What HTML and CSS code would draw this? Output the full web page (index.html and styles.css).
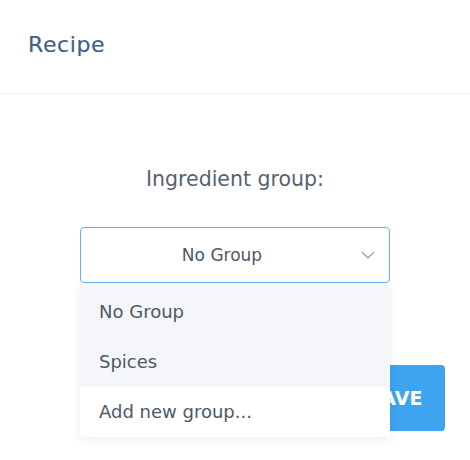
FILE: index.html
```html
<!DOCTYPE html>
<html lang="en">

<head>
    <meta charset="UTF-8">
    <meta name="viewport" content="width=device-width, initial-scale=1.0">
    <title>Recipe</title>
    <link rel="stylesheet" href="styles.css">
</head>

<body>
    <div class="header">
        <h1>Recipe</h1>
    </div>

    <div class="content">
        <div class="label">Ingredient group:</div>

        <div class="select-wrap">
            <div class="select">
                <span>No Group</span>
                <svg class="chevron" width="14" height="8" viewBox="0 0 14 8">
                    <path d="M1 1 L7 7 L13 1" fill="none" stroke="#9aa3ad" stroke-width="1.4" />
                </svg>
            </div>
            <ul class="dropdown">
                <li class="option">No Group</li>
                <li class="option">Spices</li>
                <li class="option add">Add new group...</li>
            </ul>
        </div>

        <div class="actions">
            <button class="button">SAVE</button>
        </div>
    </div>
</body>

</html>
```

FILE: styles.css
```css
body {
    font-family: 'DejaVu Sans', 'Open Sans', sans-serif;
    margin: 0;
    background: #ffffff;
    color: #4d5968;
    width: 470px;
    height: 460px;
    overflow: hidden;
}

.header {
    height: 93px;
    border-bottom: 1px solid #eceef1;
    display: flex;
    align-items: center;
    padding-left: 28px;
}

h1 {
    margin: 0 0 4px;
    font-size: 22px;
    font-weight: 400;
    letter-spacing: 0.6px;
    color: #3f5f86;
    -webkit-text-stroke: 0.2px #3f5f86;
}

.content {
    display: flex;
    flex-direction: column;
    align-items: center;
}

.label {
    margin-top: 72px;
    font-size: 20.5px;
    color: #58626f;
    height: 26px;
    line-height: 26px;
}

.select-wrap {
    position: relative;
    margin-top: 35px;
    width: 310px;
}

.select {
    height: 54px;
    border: 1.5px solid #62b1f3;
    border-radius: 4px;
    display: flex;
    align-items: center;
    justify-content: center;
    padding-right: 26px;
    font-size: 17px;
    color: #4d5968;
    position: relative;
}

.chevron {
    position: absolute;
    right: 14px;
    top: 23px;
}

.dropdown {
    position: absolute;
    top: 57px;
    left: 0;
    right: 0;
    margin: 0;
    padding: 3px 0 0;
    list-style: none;
    background: #f5f6f9;
    box-shadow: 0 2px 10px rgba(0, 0, 0, 0.08);
    z-index: 5;
}

.option {
    height: 50px;
    line-height: 50px;
    padding-left: 19px;
    font-size: 18px;
    color: #4d5968;
}

.option.add {
    background: #ffffff;
}

.actions {
    align-self: stretch;
    display: flex;
    justify-content: flex-end;
    padding-right: 25px;
    margin-top: 82px;
}

.button {
    background: #3ea4ef;
    color: #ffffff;
    border: none;
    border-radius: 4px;
    width: 100px;
    height: 66px;
    font-family: inherit;
    font-size: 19px;
    font-weight: 700;
}
```
